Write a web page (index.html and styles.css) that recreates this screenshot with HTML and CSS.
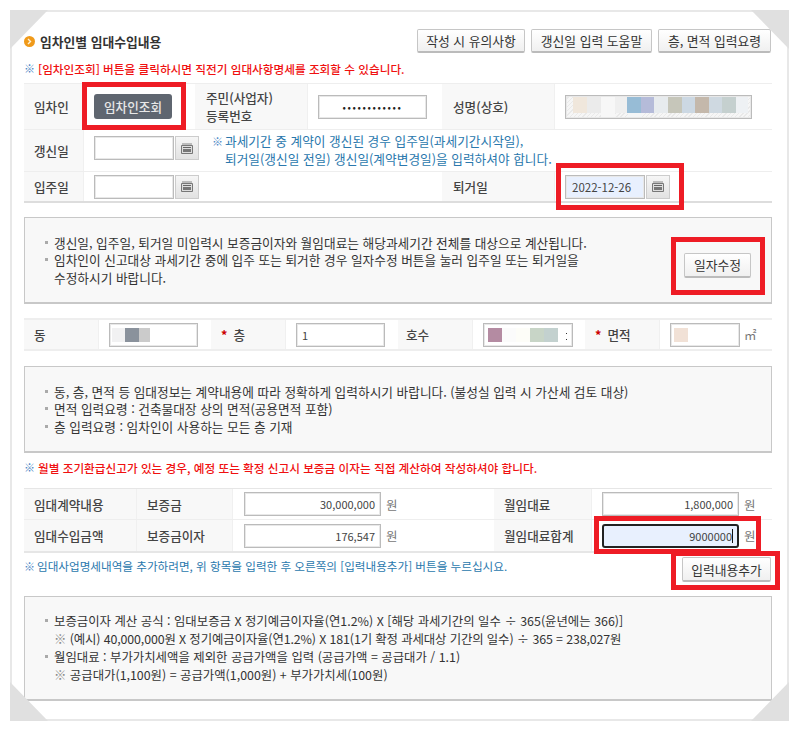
FILE: index.html
```html
<!DOCTYPE html>
<html lang="ko">
<head>
<meta charset="utf-8">
<title>임차인별 임대수입내용</title>
<link rel="stylesheet" href="styles.css">
</head>
<body>
<main class="frame">
  <header class="head">
    <h1 class="title"><svg class="dot" width="11" height="11" viewBox="0 0 11 11"><circle cx="5.5" cy="5.5" r="5.5" fill="#f09a1a"/><path d="M4 3l2.5 2.5L4 8" fill="none" stroke="#fff3d8" stroke-width="1.4"/></svg>임차인별 임대수입내용</h1>
    <div class="head-btns">
      <button class="btn w108">작성 시 유의사항</button>
      <button class="btn w121">갱신일 입력 도움말</button>
      <button class="btn w113">층, 면적 입력요령</button>
    </div>
  </header>
  <p class="note red n1"><span class="mark">※</span>[임차인조회] 버튼을 클릭하시면 직전기 임대사항명세를 조회할 수 있습니다.</p>

  <section class="t1">
    <div class="row r46 c-a">
      <div class="lab">임차인</div>
      <div class="cell pl10"><button class="dark">임차인조회</button></div>
      <div class="lab pl11 tight">주민(사업자)<br>등록번호</div>
      <div class="cell pl10"><div class="inp w109 masked">••••••••••••</div></div>
      <div class="lab pl11">성명(상호)</div>
      <div class="cell pl10">
        <div class="inp w187 hatch">
          <svg class="mosaic" width="183" height="20" viewBox="0 0 183 20">
            <rect x="7" width="14" height="16" fill="#f0e7dc"/><rect x="21" width="14" height="16" fill="#ebebeb"/>
            <rect x="35" width="14" height="20" fill="#f7f7f7"/><rect x="49" width="13" height="16" fill="#efefef"/>
            <rect x="62" width="14" height="20" fill="#f4f6f7"/><rect x="61" width="14" height="16" fill="#97bcd6"/>
            <rect x="75" width="13" height="16" fill="#b5bbd9"/><rect x="88" width="14" height="16" fill="#e7ebee"/>
            <rect x="102" width="14" height="16" fill="#c6c6ba"/><rect x="116" width="13" height="16" fill="#ccd8e3"/>
            <rect x="129" width="14" height="16" fill="#c4b8ab"/><rect x="143" width="13" height="16" fill="#cfd9e1"/>
            <rect x="156" width="14" height="16" fill="#c5d0cf"/><rect x="170" width="12" height="16" fill="#eef1f4"/>
          </svg>
        </div>
      </div>
    </div>
    <div class="row r42 c-b">
      <div class="lab">갱신일</div>
      <div class="cell pl10 top">
        <div class="date"><div class="inp w80"></div><span class="cal"><svg width="12" height="11" viewBox="0 0 12 11"><path d="M.5 2.5h11v8H.5z" fill="#ddd" stroke="#777"/><path d="M2 0v2M4 0v2M6 0v2M8 0v2M10 0v2" stroke="#888"/><path d="M2 4h8v1H2z" fill="#666"/><path d="M2 6h8v3H2z" fill="#777"/></svg></span></div>
        <p class="blue-note"><span class="mark">※</span>과세기간 중 계약이 갱신된 경우 입주일(과세기간시작일),<br>퇴거일(갱신일 전일) 갱신일(계약변경일)을 입력하셔야 합니다.</p>
      </div>
    </div>
    <div class="row r31 c-c last">
      <div class="lab">입주일</div>
      <div class="cell pl10"><div class="date"><div class="inp w80"></div><span class="cal"><svg width="12" height="11" viewBox="0 0 12 11"><path d="M.5 2.5h11v8H.5z" fill="#ddd" stroke="#777"/><path d="M2 0v2M4 0v2M6 0v2M8 0v2M10 0v2" stroke="#888"/><path d="M2 4h8v1H2z" fill="#666"/><path d="M2 6h8v3H2z" fill="#777"/></svg></span></div></div>
      <div class="lab pl11">퇴거일</div>
      <div class="cell pl10"><div class="date"><div class="inp w80 filled">2022-12-26</div><span class="cal"><svg width="12" height="11" viewBox="0 0 12 11"><path d="M.5 2.5h11v8H.5z" fill="#ddd" stroke="#777"/><path d="M2 0v2M4 0v2M6 0v2M8 0v2M10 0v2" stroke="#888"/><path d="M2 4h8v1H2z" fill="#666"/><path d="M2 6h8v3H2z" fill="#777"/></svg></span></div></div>
    </div>
  </section>

  <section class="box b1">
    <ul class="list">
      <li>갱신일, 입주일, 퇴거일 미입력시 보증금이자와 월임대료는 해당과세기간 전체를 대상으로 계산됩니다.</li>
      <li>임차인이 신고대상 과세기간 중에 입주 또는 퇴거한 경우 일자수정 버튼을 눌러 입주일 또는 퇴거일을<br>수정하시기 바랍니다.</li>
    </ul>
    <button class="btn w66">일자수정</button>
  </section>

  <section class="t2">
    <div class="lab">동</div>
    <div class="cell pl10"><div class="inp w89"><svg class="mosaic" width="85" height="14" viewBox="0 0 85 14"><rect x="2" width="13" height="14" fill="#f1f1f2"/><rect x="15" width="14" height="14" fill="#8a929c"/><rect x="29" width="11" height="14" fill="#cbcbcb"/></svg></div></div>
    <div class="lab"><span class="star">*</span>층</div>
    <div class="cell pl10"><div class="inp w89 val">1</div></div>
    <div class="lab pl8">호수</div>
    <div class="cell pl10"><div class="inp w90"><svg class="mosaic" width="86" height="14" viewBox="0 0 86 14"><rect x="4" width="14" height="14" fill="#b48ba2"/><rect x="18" width="14" height="14" fill="#fbfbfb"/><rect x="32" width="14" height="14" fill="#fdfdf8"/><rect x="46" width="14" height="14" fill="#c8d5c7"/><rect x="60" width="14" height="14" fill="#c3d1cf"/><rect x="82" y="5" width="1" height="1" fill="#333"/><rect x="82" y="11" width="1" height="1" fill="#333"/></svg></div></div>
    <div class="lab"><span class="star">*</span>면적</div>
    <div class="cell pl10 gap4"><div class="inp w70"><svg class="mosaic" width="66" height="14" viewBox="0 0 66 14"><rect x="3" width="14" height="14" fill="#f1e1d6"/></svg></div><span class="unit">㎡</span></div>
  </section>

  <section class="box b2">
    <ul class="list">
      <li>동, 층, 면적 등 임대정보는 계약내용에 따라 정확하게 입력하시기 바랍니다. (불성실 입력 시 가산세 검토 대상)</li>
      <li>면적 입력요령 : 건축물대장 상의 면적(공용면적 포함)</li>
      <li>층 입력요령 : 임차인이 사용하는 모든 층 기재</li>
    </ul>
  </section>

  <p class="note red n2"><span class="mark">※</span>월별 조기환급신고가 있는 경우, 예정 또는 확정 신고시 보증금 이자는 직접 계산하여 작성하셔야 합니다.</p>

  <section class="t3">
    <div class="row3 first">
      <div class="lab">임대계약내용</div><div class="lab">보증금</div>
      <div class="cell pl11 gap5"><div class="inp w137 num">30,000,000</div><span class="unit">원</span></div>
      <div class="lab">월임대료</div>
      <div class="cell pl10 gap5"><div class="inp w137 num">1,800,000</div><span class="unit">원</span></div>
    </div>
    <div class="row3">
      <div class="lab">임대수입금액</div><div class="lab">보증금이자</div>
      <div class="cell pl11 gap5"><div class="inp w137 num">176,547</div><span class="unit">원</span></div>
      <div class="lab">월임대료합계</div>
      <div class="cell pl10 gap5"><div class="inp w137 num focus">9000000<i class="caret"></i></div><span class="unit">원</span></div>
    </div>
  </section>

  <div class="add">
    <p class="blue-note small"><span class="mark">※</span>임대사업명세내역을 추가하려면, 위 항목을 입력한 후 오른쪽의 [입력내용추가] 버튼을 누르십시요.</p>
    <button class="btn w90b">입력내용추가</button>
  </div>

  <section class="box b3">
    <ul class="list">
      <li>보증금이자 계산 공식 : 임대보증금 X 정기예금이자율(연1.2%) X [해당 과세기간의 일수 ÷ 365(윤년에는 366)]<br><span class="tighter"><span class="g">※</span> (예시) 40,000,000원 X 정기예금이자율(연1.2%) X 181(1기 확정 과세대상 기간의 일수) ÷ 365 = 238,027원</span></li>
      <li>월임대료 : 부가가치세액을 제외한 공급가액을 입력 (공급가액 = 공급대가 / 1.1)<br><span class="g">※</span> 공급대가(1,100원) = 공급가액(1,000원) + 부가가치세(100원)</li>
    </ul>
  </section>

  <span class="tri tl"></span><span class="tri tr"></span><span class="tri bl"></span><span class="tri br"></span>
  <span class="mark-box m1"></span><span class="mark-box m2"></span><span class="mark-box m3"></span><span class="mark-box m4"></span><span class="mark-box m5"></span>
</main>
</body>
</html>
```

FILE: styles.css
```css
* { box-sizing: border-box; }
html, body { margin: 0; background: #fff; }
body { font-family: "Noto Sans CJK KR", "Noto Sans", sans-serif; font-size: 11px; color: #333; width: 800px; height: 731px; overflow: hidden; }
p, ul, h1 { margin: 0; padding: 0; }
.frame { position: relative; margin: 10px 0 0 10px; width: 779px; height: 711px; border: 2px solid #e8e8e8; padding: 0 15px 0 12px; }
.head { display: flex; justify-content: space-between; align-items: center; height: 24px; margin-top: 17px; }
.title { display: flex; align-items: center; gap: 5px; font-size: 12.8px; font-weight: 700; color: #333; }
.dot { display: block; flex: none; }
.head-btns { display: flex; gap: 6px; padding-right: 1px; }
.btn { height: 24px; font: inherit; font-size: 12.8px; color: #333; background: linear-gradient(#fff, #f0f0f0); border: 1px solid #c6c6c6; border-bottom: 2px solid #bbb; border-radius: 2px; padding: 0; }
.w108 { width: 108px; } .w121 { width: 121px; } .w113 { width: 113px; }
.w66 { width: 67px; height: 25px; flex: none; margin-top: 10px; }
.w90b { width: 89px; height: 25px; }
.note { display: flex; align-items: center; height: 16px; font-size: 11.65px; }
.red { color: #f01010; font-weight: 500; }
.mark { color: #4a86c5; font-weight: 300; font-size: 11px; margin-right: 3px; }
.n1 { margin-top: 7px; }
.t1 { margin-top: 7px; border-top: 1px solid #eee; }
.row { display: grid; border-bottom: 1px solid #eee; }
.r46 { height: 46px; } .r42 { height: 42px; } .r31 { height: 31px; }
.last { border-bottom: 2px solid #ddd; }
.c-a { grid-template-columns: 60px 111px 113px 134px 113px 217px; }
.c-b { grid-template-columns: 60px 688px; }
.c-c { grid-template-columns: 60px 358px 113px 217px; }
.lab { display: flex; align-items: center; background: #f8f8f8; padding-left: 10px; border-right: 1px solid #f0f0f0; font-size: 12.6px; font-weight: 500; color: #444; }
.lab.tight { line-height: 18px; }
.lab.pl11 { padding-left: 11px; }
.lab.pl8 { padding-left: 8px; }
.pl11 { padding-left: 11px; } .pl10 { padding-left: 10px; }
.cell { display: flex; align-items: center; }
.cell.top { align-items: flex-start; padding-top: 6px; }
.gap4 { gap: 4px; } .gap5 { gap: 5px; }
.dark { width: 78px; height: 25px; font: inherit; font-size: 12.6px; font-weight: 500; color: #e8e8e8; background: #5f6670; border: 0; border-radius: 3px; padding: 0; }
.inp { position: relative; display: flex; align-items: center; height: 24px; background: #fff; border: 1px solid #bbb; box-shadow: inset 0 0 0 1px #e8e8e8; flex: none; overflow: hidden; color: #444; }
.w109 { width: 109px; } .w187 { width: 187px; } .w80 { width: 80px; } .w89 { width: 89px; } .w90 { width: 90px; } .w70 { width: 70px; } .w137 { width: 137px; }
.masked { justify-content: center; font-size: 10px; color: #222; letter-spacing: 1.6px; }
.hatch { background: repeating-linear-gradient(135deg, #f6f6f6 0 2px, #e9e9e9 2px 3px); }
.mosaic { display: block; flex: none; }
.filled { background: #e8f0fe; padding-left: 6px; font-size: 11.5px; }
.val { padding-left: 5px; }
.date { display: flex; gap: 1px; flex: none; }
.cal { display: flex; align-items: center; justify-content: center; width: 24px; height: 24px; background: linear-gradient(#f6f6f6, #e2e2e2); border: 1px solid #ccc; }
.blue-note { color: #2a78ad; font-size: 12.7px; line-height: 18px; margin-left: 13px; position: relative; padding-left: 13px; margin-top: -4px; }
.blue-note .mark { position: absolute; left: 0; }
.blue-note.small { margin: 0; padding-left: 13px; font-size: 11.6px; }
.box { background: #f8f8f8; border: 1px solid #c8c8c8; border-bottom-width: 2px; }
.b1 { display: flex; align-items: center; justify-content: space-between; height: 87px; margin-top: 14px; padding: 0 20px 0 0; }
.b2 { display: flex; align-items: center; height: 87px; margin-top: 15px; }
.b3 { display: flex; align-items: center; height: 105px; margin-top: 14px; }
.list { list-style: none; padding-left: 29px; font-size: 12.7px; line-height: 17.5px; }
.b3 .list { line-height: 18px; font-size: 12.4px; }
.tighter { letter-spacing: -0.12px; }
.list li { position: relative; }
.list li::before { content: ""; position: absolute; left: -9px; top: 7px; width: 3px; height: 3px; background: #aaa; }
.g { color: #888; }
.t2 { display: grid; grid-template-columns: 75px 112px 75px 112px 75px 112px 75px 112px; height: 33px; margin-top: 14px; border-top: 2px solid #eee; border-bottom: 2px solid #eee; }
.star { color: #c00; font-weight: 700; margin-right: 6px; }
.unit { color: #777; font-size: 12.5px; }
.n2 { margin-top: 6px; }
.t3 { margin-top: 13px; border-top: 1px solid #e6e6e6; border-bottom: 2px solid #e6e6e6; }
.row3 { display: grid; grid-template-columns: 113px 96px 261px 98px 180px; height: 31px; }
.row3.first { border-bottom: 1px solid #eee; }
.num { justify-content: flex-end; padding-right: 5px; }
.focus { background: #e8f0fe; border: 2px solid #222; border-radius: 3px; padding-right: 4px; box-shadow: none; }
.caret { width: 1px; height: 14px; background: #111; }
.add { display: flex; justify-content: space-between; align-items: flex-start; height: 29px; padding-top: 4px; padding-right: 1px; }
.tri { position: absolute; width: 38px; height: 39px; background: #e0e0e0; }
.tl { left: -2px; top: -2px; clip-path: polygon(0 0, 100% 0, 0 100%); }
.tr { right: -2px; top: -2px; clip-path: polygon(0 0, 100% 0, 100% 100%); }
.bl { left: -2px; bottom: -2px; clip-path: polygon(0 0, 100% 100%, 0 100%); }
.br { right: -2px; bottom: -2px; clip-path: polygon(100% 0, 100% 100%, 0 100%); }
.mark-box { position: absolute; border: 5px solid #ee1c25; }
.m1 { left: 70px; top: 70px; width: 104px; height: 48px; }
.m2 { left: 544px; top: 151px; width: 128px; height: 47px; }
.m3 { left: 659px; top: 225px; width: 94px; height: 58px; }
.m4 { left: 582px; top: 504px; width: 167px; height: 38px; }
.m5 { left: 659px; top: 539px; width: 109px; height: 39px; }
```
